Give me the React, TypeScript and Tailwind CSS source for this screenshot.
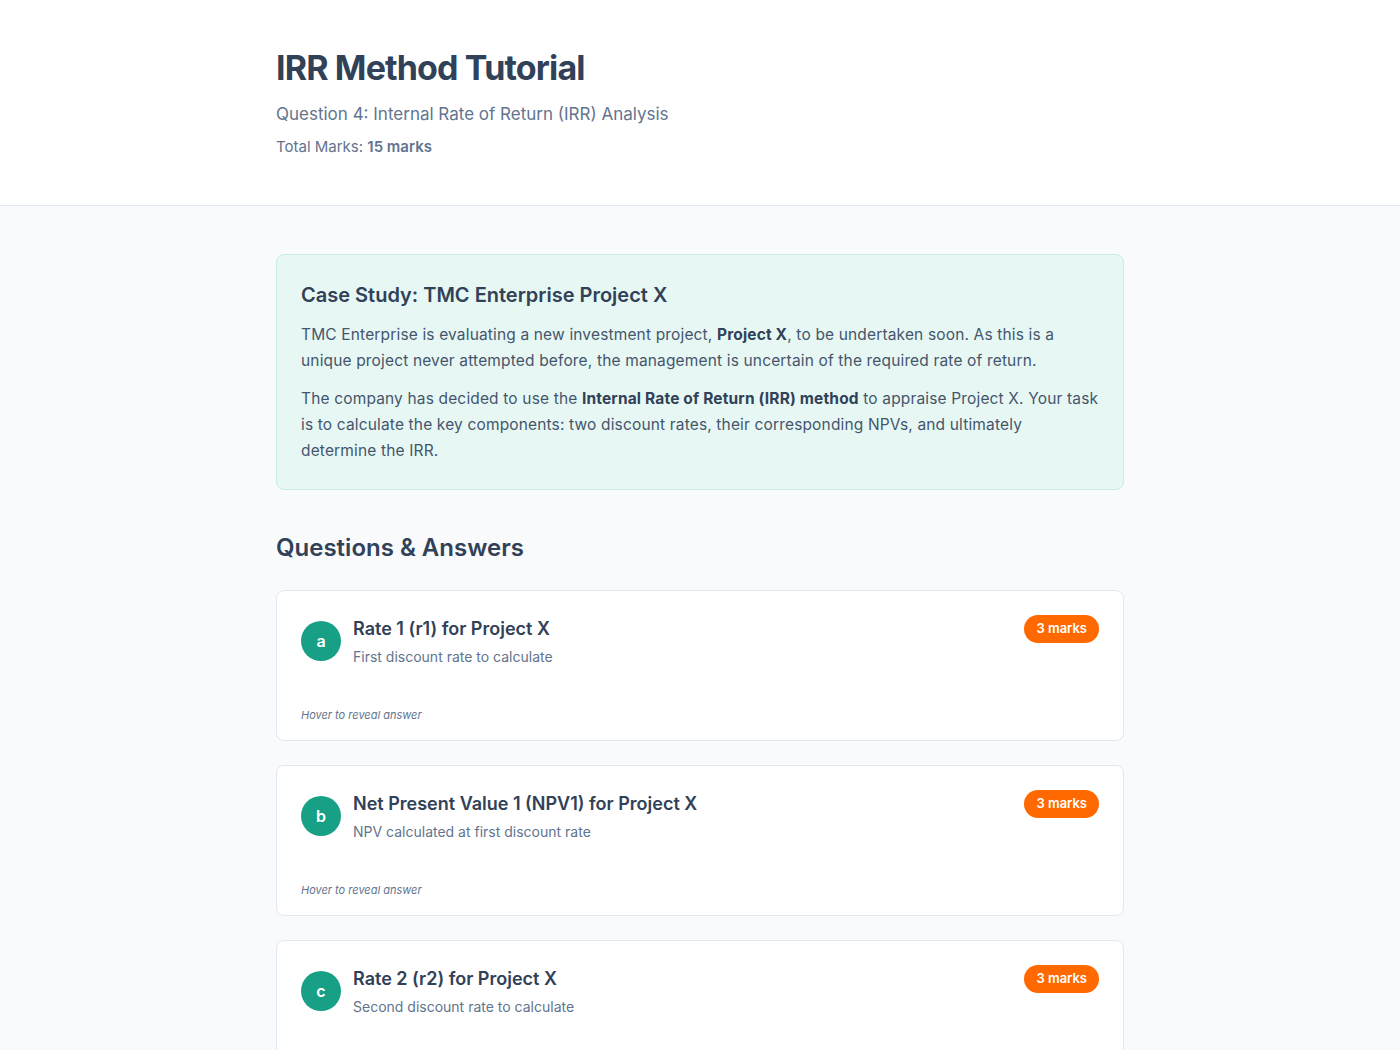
import React from "react";

const questions = [
  { letter: "a", title: "Rate 1 (r1) for Project X", sub: "First discount rate to calculate" },
  { letter: "b", title: "Net Present Value 1 (NPV1) for Project X", sub: "NPV calculated at first discount rate" },
  { letter: "c", title: "Rate 2 (r2) for Project X", sub: "Second discount rate to calculate" },
  { letter: "d", title: "Net Present Value 2 (NPV2) for Project X", sub: "NPV calculated at second discount rate" },
];

const App: React.FC = () => {
  return (
    <div className="min-h-screen bg-slate-50 text-slate-700" style={{ fontFamily: "Inter, 'Noto Sans', sans-serif" }}>
      <header className="bg-white border-b border-slate-200">
        <div className="w-[848px] mx-auto pt-[46px] pb-[47px]">
          <h1 className="text-[34px] font-bold text-slate-700 tracking-tight leading-[44px]">IRR Method Tutorial</h1>
          <p className="mt-[12px] text-[17px] text-slate-500">Question 4: Internal Rate of Return (IRR) Analysis</p>
          <p className="mt-[8px] text-[15px] text-slate-500">
            Total Marks: <span className="font-semibold">15 marks</span>
          </p>
        </div>
      </header>

      <main className="w-[848px] mx-auto pt-12">
        <section className="rounded-lg border border-[#c9efe4] bg-[#e7f8f4] px-6 pt-[25px] pb-[25px]">
          <h2 className="text-[20px] font-semibold text-slate-700">Case Study: TMC Enterprise Project X</h2>
          <p className="mt-[12px] text-[15.5px] tracking-[0.01em] leading-[26px] text-slate-600">
            TMC Enterprise is evaluating a new investment project, <b className="text-slate-700">Project X</b>, to be undertaken soon. As this is a unique project never attempted before, the management is uncertain of the required rate of return.
          </p>
          <p className="mt-3 text-[15.5px] tracking-[0.01em] leading-[26px] text-slate-600">
            The company has decided to use the <b className="text-slate-700">Internal Rate of Return (IRR) method</b> to appraise Project X. Your task is to calculate the key components: two discount rates, their corresponding NPVs, and ultimately determine the IRR.
          </p>
        </section>

        <h2 className="mt-[40px] text-[24px] font-semibold text-slate-700">Questions &amp; Answers</h2>

        <div className="mt-[24px] flex flex-col gap-[24px] pb-10">
          {questions.map((q) => (
            <div key={q.letter} className="h-[151px] rounded-lg border border-slate-200 bg-white px-6 pt-6">
              <div className="flex items-start justify-between">
                <div className="flex items-center gap-3">
                  <div className="w-10 h-10 rounded-full bg-[#17a085] text-white flex items-center justify-center text-[16px] font-semibold">
                    {q.letter}
                  </div>
                  <div>
                    <div className="text-[18px] font-semibold text-slate-700">{q.title}</div>
                    <div className="mt-[4px] text-[14px] text-slate-500">{q.sub}</div>
                  </div>
                </div>
                <span className="rounded-full bg-orange-500 text-white text-[13px] font-semibold px-3 py-[4px]">3 marks</span>
              </div>
              <div className="mt-[40px] text-[11px] italic text-slate-500">Hover to reveal answer</div>
            </div>
          ))}
        </div>
      </main>
    </div>
  );
};

export default App;
